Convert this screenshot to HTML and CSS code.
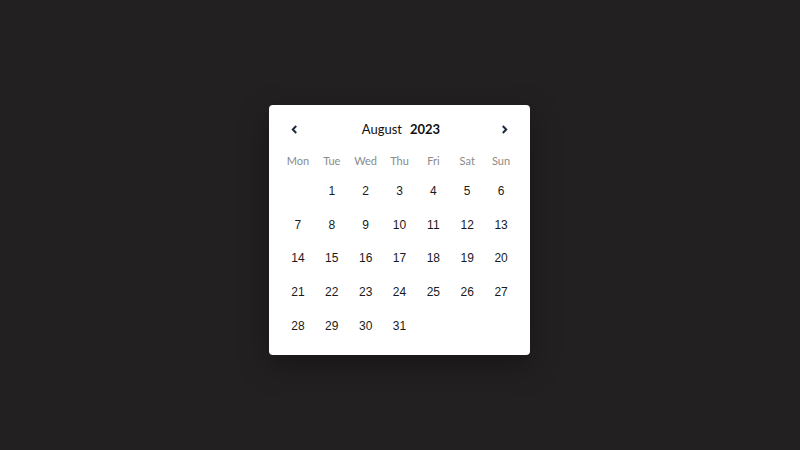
FILE: index.html
```html
<!DOCTYPE html>
<html lang="en">
<head>
<meta charset="utf-8">
<title>Calendar</title>
<link rel="stylesheet" href="styles.css">
</head>
<body>
<main class="stage">
  <section class="calendar">
    <header class="cal-head">
      <button class="nav" aria-label="Previous month">
        <svg width="7" height="9" viewBox="0 0 7 9"><path d="M5.2 1 L1.8 4.5 L5.2 8" fill="none" stroke="#1c2a3f" stroke-width="2"/></svg>
      </button>
      <div class="title"><span class="month">August</span><span class="year">2023</span></div>
      <button class="nav" aria-label="Next month">
        <svg width="7" height="9" viewBox="0 0 7 9"><path d="M1.8 1 L5.2 4.5 L1.8 8" fill="none" stroke="#1c2a3f" stroke-width="2"/></svg>
      </button>
    </header>
    <div class="weekdays">
      <span>Mon</span><span>Tue</span><span>Wed</span><span>Thu</span><span>Fri</span><span>Sat</span><span>Sun</span>
    </div>
    <div class="days">
      <span></span><span>1</span><span>2</span><span>3</span><span>4</span><span>5</span><span>6</span>
      <span>7</span><span>8</span><span>9</span><span>10</span><span>11</span><span>12</span><span>13</span>
      <span>14</span><span>15</span><span>16</span><span>17</span><span>18</span><span>19</span><span>20</span>
      <span>21</span><span>22</span><span>23</span><span>24</span><span>25</span><span>26</span><span>27</span>
      <span>28</span><span>29</span><span>30</span><span>31</span>
    </div>
  </section>
</main>
</body>
</html>
```
FILE: styles.css
```css
html, body {
  margin: 0;
  padding: 0;
  height: 100%;
}
body {
  background: #232022;
  font-family: "Liberation Sans", Arial, sans-serif;
}
.stage {
  height: 440px;
  padding-top: 10px;
  display: flex;
  align-items: center;
  justify-content: center;
}
.calendar {
  width: 237px;
  padding: 12px;
  background: #ffffff;
  border-radius: 4px;
  box-shadow: 0 10px 30px rgba(0, 0, 0, 0.35);
  margin-left: -1px;
}
.cal-head {
  height: 24px;
  padding: 0 10px;
  display: flex;
  align-items: center;
  justify-content: space-between;
  margin-bottom: 5px;
}
.nav {
  border: 0;
  background: none;
  padding: 0;
  width: 7px;
  height: 9px;
  display: flex;
  cursor: pointer;
}
.title {
  font-family: Lato, "Noto Sans", sans-serif;
  font-size: 13px;
  color: #111;
  display: flex;
  gap: 8px;
  margin-left: 3px;
}
.year {
  font-weight: 700;
}
.weekdays {
  display: grid;
  grid-template-columns: repeat(7, 1fr);
  height: 28px;
  align-items: center;
  text-align: center;
  font-family: Lato, "Noto Sans", sans-serif;
  font-size: 11px;
  color: #8a8a8a;
}
.days {
  display: grid;
  grid-template-columns: repeat(7, 1fr);
  grid-auto-rows: 33.8px;
  align-items: center;
  text-align: center;
  font-size: 12px;
  color: #1a1a1a;
}
```
